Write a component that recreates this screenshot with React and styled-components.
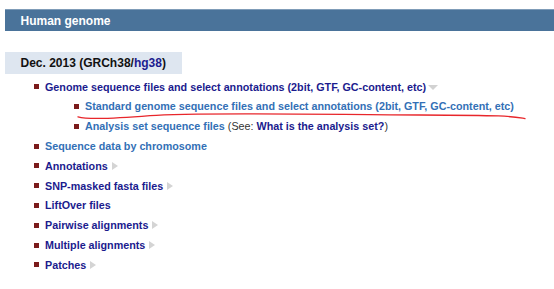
import React from 'react'
import styled, { createGlobalStyle } from 'styled-components'

const GlobalStyle = createGlobalStyle`
  html, body {
    margin: 0;
    padding: 0;
    background: #ffffff;
  }
  body {
    font-family: "Liberation Sans", Arial, sans-serif;
  }
`

const items = [
  {
    label: 'Genome sequence files and select annotations (2bit, GTF, GC-content, etc)',
    arrow: 'down',
    children: [
      { label: 'Standard genome sequence files and select annotations (2bit, GTF, GC-content, etc)', light: true },
      { label: 'Analysis set sequence files', light: true, note: true },
    ],
  },
  { label: 'Sequence data by chromosome', light: true },
  { label: 'Annotations', arrow: 'right' },
  { label: 'SNP-masked fasta files', arrow: 'right' },
  { label: 'LiftOver files' },
  { label: 'Pairwise alignments', arrow: 'right' },
  { label: 'Multiple alignments', arrow: 'right' },
  { label: 'Patches', arrow: 'right' },
]

function Row({ item, nested }) {
  return (
    <>
      <Item $nested={nested}>
        <Bullet />
        <Link $light={item.light}>{item.label}</Link>
        {item.note && (
          <Note>
            {' '}(See: <Link>What is the analysis set?</Link>)
          </Note>
        )}
        {item.arrow && <Arrow $dir={item.arrow} />}
      </Item>
      {item.children && item.children.map((c) => <Row key={c.label} item={c} nested />)}
    </>
  )
}

export default function App() {
  return (
    <Page>
      <GlobalStyle />
      <Header>Human genome</Header>
      <Assembly>
        Dec. 2013 (GRCh38/<Link>hg38</Link>)
      </Assembly>
      <List>
        {items.map((it) => <Row key={it.label} item={it} />)}
      </List>
      {/* hand-drawn red underline */}
      <Scribble viewBox="0 0 554 289" width="554" height="289">
        <path
          d="M78,116.8 C86,119.2 104,119.4 150,115.6 S 330,114.6 420,115 S 510,116.2 525,118.6"
          fill="none"
          stroke="#e8262b"
          strokeWidth="1.3"
          strokeLinecap="round"
        />
      </Scribble>
    </Page>
  )
}

const Page = styled.div`
  position: relative;
  width: 554px;
  height: 289px;
  overflow: hidden;
  padding: 9px 0 0 5px;
  box-sizing: border-box;
`

const Header = styled.div`
  height: 22px;
  line-height: 22px;
  background: #4a739a;
  border-top: 1px solid #7f9cb8;
  box-sizing: border-box;
  padding-left: 15.5px;
  color: #ffffff;
  font-weight: 700;
  font-size: 12px;
`

const Assembly = styled.div`
  margin-top: 21px;
  width: 177px;
  height: 22px;
  line-height: 22px;
  background: #dee6f0;
  padding-left: 15.5px;
  box-sizing: border-box;
  color: #111111;
  font-weight: 700;
  font-size: 12px;
`

const List = styled.div`
  margin-top: 2.8px;
  padding-left: 29px;
`

const Item = styled.div`
  display: flex;
  align-items: center;
  height: 19.8px;
  padding-left: ${(p) => (p.$nested ? '40px' : '0')};
  font-size: 10.75px;
  font-weight: 700;
  white-space: nowrap;
`

const Bullet = styled.span`
  width: 5px;
  height: 5px;
  background: #7b1b1b;
  margin-right: 6px;
  flex-shrink: 0;
`

const Link = styled.span`
  color: ${(p) => (p.$light ? '#3370b6' : '#1b1b8e')};
  font-weight: 700;
`

const Note = styled.span`
  color: #333333;
  font-weight: 400;
  white-space: pre;
`

const Arrow = styled.span`
  width: 0;
  height: 0;
  margin-left: ${(p) => (p.$dir === 'down' ? '2px' : '4px')};
  ${(p) =>
    p.$dir === 'down'
      ? `
    border-left: 5px solid transparent;
    border-right: 5px solid transparent;
    border-top: 5px solid #d2d2d2;
    margin-top: 2px;
  `
      : `
    border-top: 4.5px solid transparent;
    border-bottom: 4.5px solid transparent;
    border-left: 6px solid #d4d4d4;
  `}
`

const Scribble = styled.svg`
  position: absolute;
  left: 0;
  top: 0;
  pointer-events: none;
`
